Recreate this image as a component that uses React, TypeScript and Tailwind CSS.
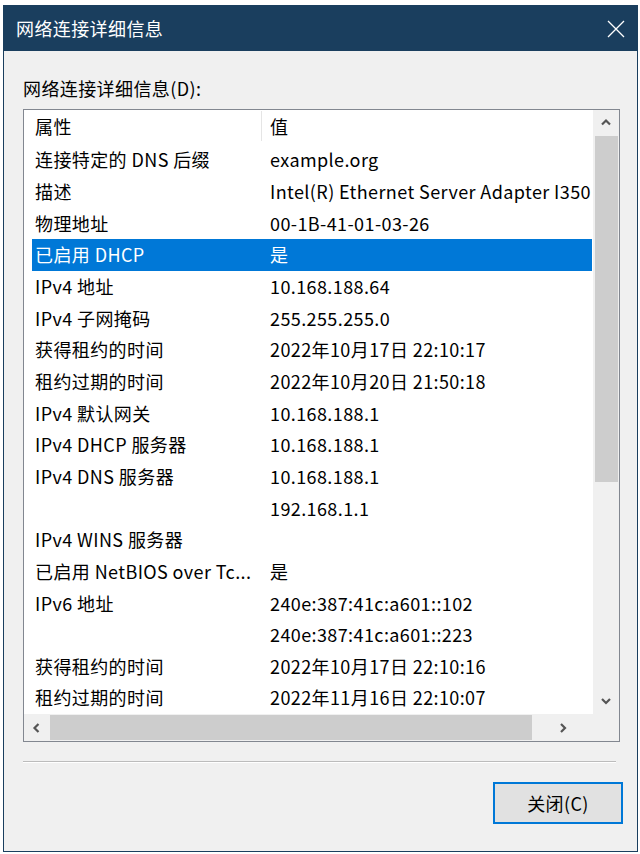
import React from 'react';

const font = { fontFamily: '"Noto Sans CJK SC", "Noto Sans", sans-serif' };

// 属性 / 值 列表
const rows: { name: string; value: string; selected?: boolean }[] = [
  { name: '连接特定的 DNS 后缀', value: 'example.org' },
  { name: '描述', value: 'Intel(R) Ethernet Server Adapter I350' },
  { name: '物理地址', value: '00-1B-41-01-03-26' },
  { name: '已启用 DHCP', value: '是', selected: true },
  { name: 'IPv4 地址', value: '10.168.188.64' },
  { name: 'IPv4 子网掩码', value: '255.255.255.0' },
  { name: '获得租约的时间', value: '2022年10月17日 22:10:17' },
  { name: '租约过期的时间', value: '2022年10月20日 21:50:18' },
  { name: 'IPv4 默认网关', value: '10.168.188.1' },
  { name: 'IPv4 DHCP 服务器', value: '10.168.188.1' },
  { name: 'IPv4 DNS 服务器', value: '10.168.188.1' },
  { name: '', value: '192.168.1.1' },
  { name: 'IPv4 WINS 服务器', value: '' },
  { name: '已启用 NetBIOS over Tc...', value: '是' },
  { name: 'IPv6 地址', value: '240e:387:41c:a601::102' },
  { name: '', value: '240e:387:41c:a601::223' },
  { name: '获得租约的时间', value: '2022年10月17日 22:10:16' },
  { name: '租约过期的时间', value: '2022年11月16日 22:10:07' },
];

function Chevron({ dir }: { dir: 'up' | 'down' | 'left' | 'right' }) {
  const d = {
    up: 'M1 6.5 L5 2.5 L9 6.5',
    down: 'M1 3 L5 7 L9 3',
    left: 'M6.5 1 L2.5 5 L6.5 9',
    right: 'M3 1 L7 5 L3 9',
  }[dir];
  return (
    <svg width="10" height="10" viewBox="0 0 10 10" fill="none">
      <path d={d} stroke="#555" strokeWidth="2.2" />
    </svg>
  );
}

export default function App() {
  return (
    <div className="w-[640px] h-[854px] bg-white pt-[5px] pl-[3px] tracking-[0.4px]" style={font}>
      <div className="w-[635px] h-[847px] border border-[#1a3e5e] bg-[#f0f0f0] flex flex-col">
        {/* 标题栏 */}
        <div className="h-[45px] bg-[#1a3e5e] flex items-center justify-between pl-[12px] pr-[12px] text-white text-[18px]">
          <span>网络连接详细信息</span>
          <svg width="18" height="18" viewBox="0 0 18 18">
            <path d="M1 1 L17 17 M17 1 L1 17" stroke="white" strokeWidth="1.3" />
          </svg>
        </div>

        <div className="pl-[19px] flex flex-col">
          <div className="mt-[25px] h-[24px] leading-[24px] text-[18px] text-black">网络连接详细信息(D):</div>

          {/* 列表框 */}
          <div className="mt-[9px] w-[597px] h-[633px] border border-[#828790] bg-white flex flex-col">
            <div className="flex h-[604px]">
              <div className="w-[569px] overflow-hidden">
                <div className="h-[34px] flex items-start pt-[3px] text-[18px] text-black">
                  <div className="w-[237px] pl-[11px]">属性</div>
                  <div className="w-px h-[30px] bg-[#e5e5e5] -mt-[2px]" />
                  <div className="pl-[8px]">值</div>
                </div>
                {rows.map((r, i) => (
                  <div
                    key={i}
                    className={
                      'ml-[8px] w-[560px] h-[31.67px] flex items-center text-[18px] whitespace-nowrap overflow-hidden ' +
                      (r.selected ? 'bg-[#0078d7] text-white' : 'text-black')
                    }
                  >
                    <div className="w-[238px] shrink-0 pl-[3px] overflow-hidden">{r.name}</div>
                    <div>{r.value}</div>
                  </div>
                ))}
              </div>
              {/* 垂直滚动条 */}
              <div className="w-[26px] bg-[#f0f0f0] flex flex-col items-center">
                <div className="h-[26px] flex items-center justify-center">
                  <Chevron dir="up" />
                </div>
                <div className="w-[23px] h-[346px] bg-[#cdcdcd]" />
                <div className="flex-1" />
                <div className="h-[26px] flex items-center justify-center">
                  <Chevron dir="down" />
                </div>
              </div>
            </div>
            {/* 水平滚动条 */}
            <div className="flex h-[27px] bg-[#f0f0f0] items-center">
              <div className="w-[26px] flex justify-center">
                <Chevron dir="left" />
              </div>
              <div className="w-[482px] h-[25px] bg-[#cdcdcd]" />
              <div className="flex-1 flex justify-center">
                <Chevron dir="right" />
              </div>
              <div className="w-[26px]" />
            </div>
          </div>

          <div className="mt-[19px] w-[593px] h-px bg-[#bcbcbc] border-b border-white box-content" />

          <div className="mt-[19px] w-[600px] flex justify-end">
            <button className="w-[130px] h-[42px] border-2 border-[#0078d7] bg-[#e1e1e1] text-[18px] text-black">
              关闭(C)
            </button>
          </div>
        </div>
      </div>
    </div>
  );
}
